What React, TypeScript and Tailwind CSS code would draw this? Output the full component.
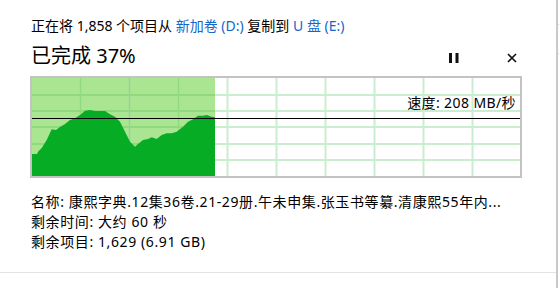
import React from "react";

// dark green area of the speed graph, inner chart coords (488 x 98)
const speedPoints: [number, number][] = [
  [0, 76], [5, 76], [6, 73.7], [9.7, 70], [14.7, 62], [19.7, 51.3], [24, 52], [28, 49],
  [33, 46], [38, 42], [43, 40.3], [48, 37], [53, 32.7], [58, 32], [63, 33], [73, 33],
  [78, 36.3], [83, 38.7], [88, 43.7], [93, 53.7], [98, 63.7], [103, 68.7], [106, 66],
  [111, 62], [116, 61], [119.7, 59.3], [124.7, 61], [129.7, 57], [134.7, 55.3],
  [139.7, 55.3], [144.7, 53.7], [151, 48.7], [156, 43.7], [161, 41.3], [166, 37.7],
  [171, 37.7], [174.7, 37], [179.7, 38.7], [183, 39.3], [183, 98], [0, 98],
];

const colLines = [48, 97, 146, 195, 244, 293, 342, 391, 440];
const rowLines = [17, 33, 49, 66, 82];
const doneWidth = 183;

function SpeedChart() {
  return (
    <div className="relative w-[492px] h-[102px] border-2 border-[#c3c3c3] bg-white">
      <svg width="488" height="98" className="block">
        <rect x="0" y="0" width={doneWidth} height="98" fill="#aae592" />
        {colLines.map((x) => (
          <g key={x}>
            <line x1={x + 0.5} y1="0" x2={x + 0.5} y2="98" stroke="#c8eecf" strokeWidth="2" />
            {x < doneWidth && (
              <line x1={x + 0.5} y1="0" x2={x + 0.5} y2="98" stroke="#92d87d" strokeWidth="2" />
            )}
          </g>
        ))}
        {rowLines.map((y) => (
          <g key={y}>
            <line x1="0" y1={y} x2="488" y2={y} stroke="#c8eecf" strokeWidth="2" />
            <line x1="0" y1={y} x2={doneWidth} y2={y} stroke="#92d87d" strokeWidth="2" />
          </g>
        ))}
        <polygon points={speedPoints.map((p) => p.join(",")).join(" ")} fill="#06ad24" />
        <line x1="0" y1="40.5" x2="488" y2="40.5" stroke="#000" strokeWidth="1" />
      </svg>
      <span className="absolute right-[4px] top-[17px] text-[14px] leading-[16px] tracking-[0.4px] text-black">
        速度: 208 MB/秒
      </span>
    </div>
  );
}

export default function App() {
  return (
    <div className="w-[559px] h-[288px] bg-white flex font-['Noto_Sans','Noto_Sans_CJK_SC',sans-serif] text-black">
      <div className="w-[556px] flex flex-col">
        <div className="pl-[31px] pt-[18px] flex-1">
          <div className="text-[14px] leading-[16px] whitespace-nowrap">
            正在将 1,858 个项目从 <span className="text-[#1467c8]">新加卷 (D:)</span> 复制到{" "}
            <span className="text-[#1467c8]">U 盘 (E:)</span>
          </div>

          <div className="mt-[12px] flex items-center h-[20px] pr-[39px]">
            <span className="text-[20px] leading-[20px]">已完成 37%</span>
            <div className="ml-auto flex items-center gap-[48px] mt-[4px]">
              <svg width="10" height="10" viewBox="0 0 10 10">
                <rect x="0" y="0" width="3" height="10" fill="#111" />
                <rect x="6.5" y="0" width="3" height="10" fill="#111" />
              </svg>
              <svg width="10" height="10" viewBox="0 0 10 10">
                <path d="M1 1 L9 9 M9 1 L1 9" stroke="#111" strokeWidth="1.6" />
              </svg>
            </div>
          </div>

          <div className="mt-[10px] -ml-[1px]">
            <SpeedChart />
          </div>

          <div className="mt-[14px] text-[14px] leading-[20px] tracking-[0.6px]">
            <div className="whitespace-nowrap">
              名称: 康熙字典.12集36卷.21-29册.午未申集.张玉书等纂.清康熙55年内...
            </div>
            <div>剩余时间: 大约 60 秒</div>
            <div>剩余项目: 1,629 (6.91 GB)</div>
          </div>
        </div>
        <div className="h-[16px] border-t border-[#e2e2e2]" />
      </div>
      <div className="w-[3px] border-l-2 border-[#c9c9c9] flex flex-col">
        <div className="h-[24px]" />
        <div className="h-px bg-[#d6d6d6]" />
        <div className="h-[28px]" />
        <div className="h-px bg-[#d6d6d6]" />
      </div>
    </div>
  );
}
